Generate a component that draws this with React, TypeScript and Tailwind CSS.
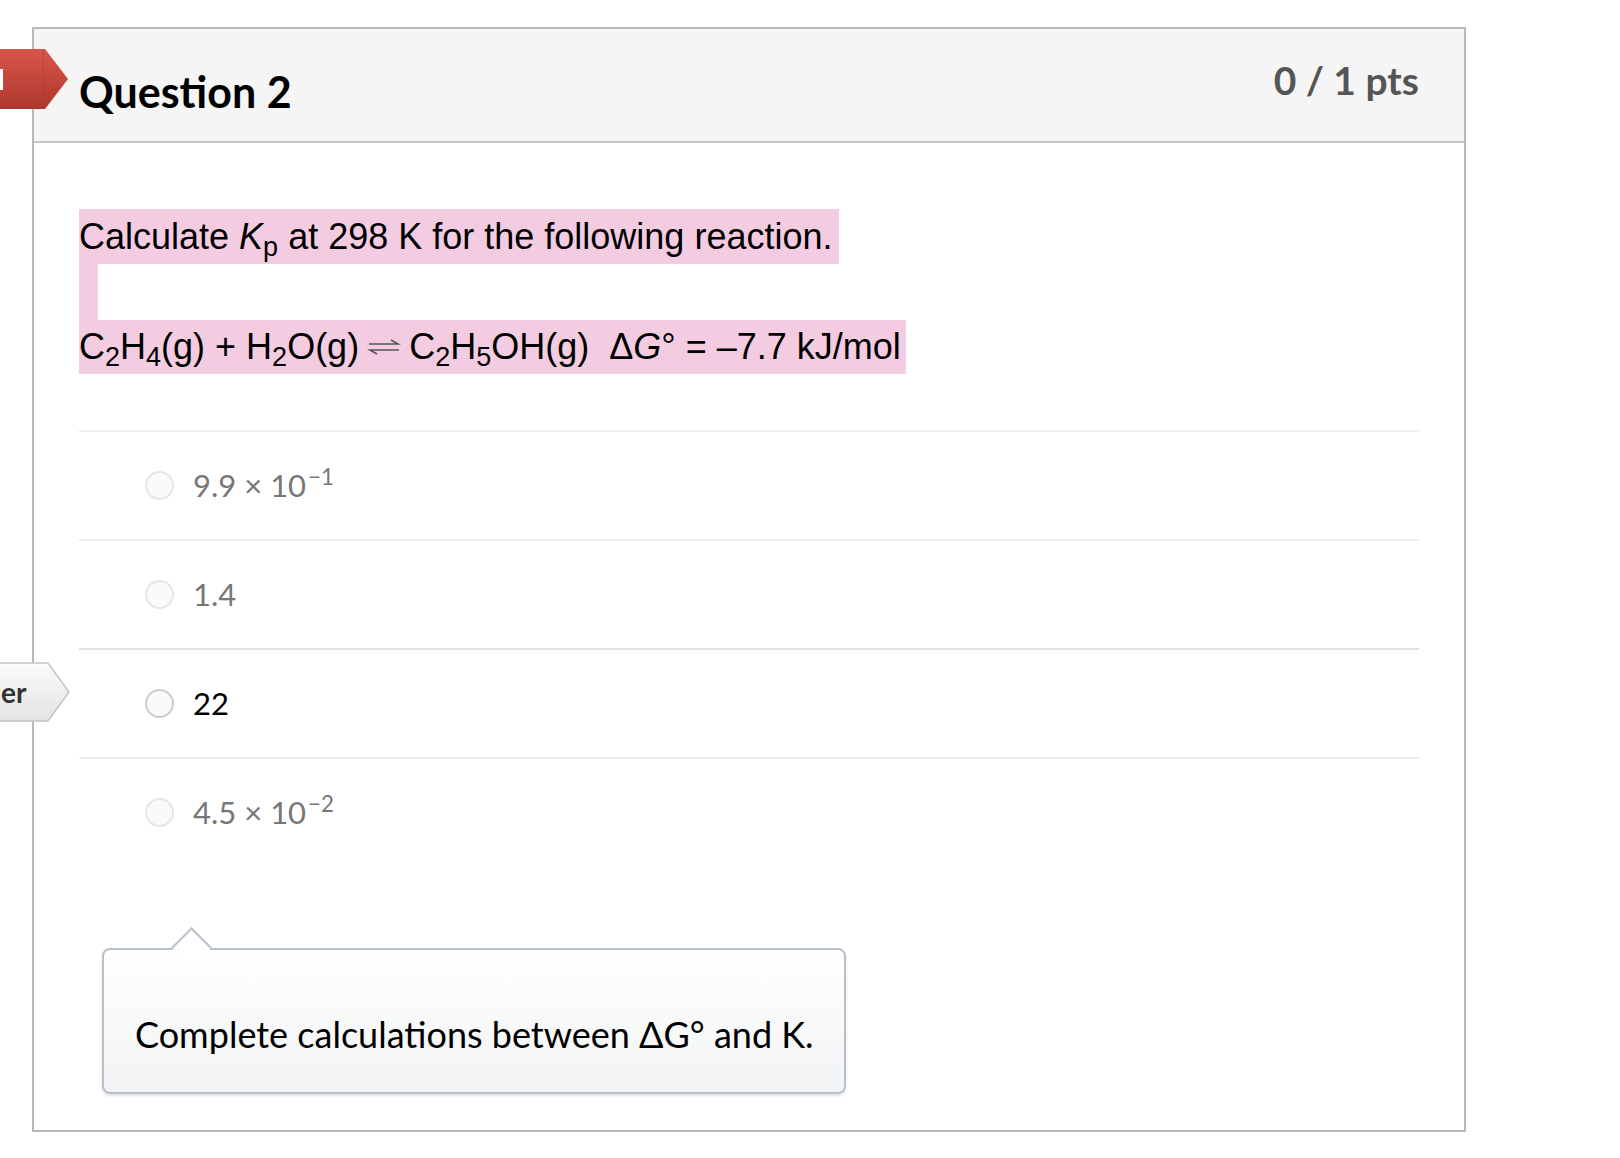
import React from 'react'

const pink = 'bg-[#f4cce1]'

function Header(){
  return (
    <div className="flex justify-between h-[114px] bg-[#f5f5f5] border-b-2 border-[#c6c6c6] pl-[45px] pr-[45px]">
      <h3 className="pt-[41px] text-[43px] leading-none font-bold text-black">Question 2</h3>
      <div className="pt-[32px] text-[39px] leading-none font-bold text-[#555]">0 / 1 pts</div>
    </div>
  )
}

function EqArrow(){
  return (
    <svg width="34" height="18" viewBox="0 0 34 18" className="inline-block align-middle mx-[8px] -mt-[4px]">
      <path d="M2 6 H31 L24 2" fill="none" stroke="#555" strokeWidth="1.6" />
      <path d="M32 12 H3 L10 16" fill="none" stroke="#555" strokeWidth="1.6" />
    </svg>
  )
}

function Prompt(){
  return (
    <div className="[font-family:'Liberation_Sans',Arial,sans-serif] text-[36px] text-black">
      <div className="flex">
        <div className={`${pink} h-[55px] leading-[55px] pr-[7px] whitespace-nowrap`}>
          Calculate <i>K</i><sub>p</sub> at 298 K for the following reaction.
        </div>
      </div>
      <div className={`${pink} w-[19px] h-[56px]`} />
      <div className="flex">
        <div className={`${pink} h-[54px] leading-[54px] pr-[5px] whitespace-nowrap`}>
          C<sub>2</sub>H<sub>4</sub>(g) + H<sub>2</sub>O(g)<EqArrow />C<sub>2</sub>H<sub>5</sub>OH(g)&nbsp; Δ<i>G</i>° = –7.7 kJ/mol
        </div>
      </div>
    </div>
  )
}

const answers: {text:React.ReactNode, picked?:boolean}[] = [
  {text:<>9.9 × 10<sup className="text-[0.72em] -top-[0.55em] ml-[2px]">−1</sup></>},
  {text:'1.4'},
  {text:'22', picked:true},
  {text:<>4.5 × 10<sup className="text-[0.72em] -top-[0.55em] ml-[2px]">−2</sup></>},
]

function Answers(){
  return (
    <div className="mt-[56px]">
      {answers.map((a,i)=>(
        <div key={i} className={`flex items-center h-[109px] border-t-2 ${a.picked?'border-[#e1e1e1]':'border-[#ededed]'}`}>
          <span className={`ml-[66px] w-[29px] h-[29px] rounded-full border-2 bg-[#fafafa] ${a.picked?'border-[#cdcdcd]':'border-[#e6e6e6]'}`} />
          <span className={`ml-[19px] text-[31px] leading-none ${a.picked?'text-black':'text-[#777]'}`}>{a.text}</span>
        </div>
      ))}
    </div>
  )
}

function Hint(){
  return (
    <div className="relative mt-[82px] ml-[23px] w-[744px] h-[146px] rounded-[8px] border-2 border-[#b8c1cb] bg-gradient-to-b from-white to-[#f2f3f4] shadow-[0_2px_3px_rgba(0,0,0,0.12)]">
      <span className="absolute left-[73px] -top-[17px] w-[29px] h-[29px] rotate-45 bg-white border-t-2 border-l-2 border-[#b8c1cb]" />
      <div className="pt-[66px] pl-[31px] text-[36px] leading-none text-black">
        Complete calculations between ΔG° and K.
      </div>
    </div>
  )
}

function RedTag(){
  return (
    <div className="absolute left-0 top-[49px] w-[68px] h-[60px]">
      <svg width="68" height="60" viewBox="0 0 68 60" className="block">
        <defs>
          <linearGradient id="rg" x1="0" y1="0" x2="0" y2="1">
            <stop offset="0" stopColor="#d9554a" />
            <stop offset="1" stopColor="#ad372d" />
          </linearGradient>
        </defs>
        <polygon points="0,0 45,0 68,30 45,60 0,60" fill="url(#rg)" />
        <line x1="43.5" y1="0" x2="43.5" y2="60" stroke="#a8352b" strokeOpacity="0.45" strokeWidth="1" />
      </svg>
      <span className="absolute left-0 top-[20px] w-[3px] h-[21px] bg-white" />
    </div>
  )
}

function CorrectTab(){
  return (
    <div className="absolute left-0 top-[662px] w-[70px] h-[60px]">
      <svg width="70" height="60" viewBox="0 0 70 60" className="block">
        <defs>
          <linearGradient id="gg" x1="0" y1="0" x2="0" y2="1">
            <stop offset="0" stopColor="#fbfbfb" />
            <stop offset="1" stopColor="#e3e3e3" />
          </linearGradient>
        </defs>
        <polygon points="-2,1 48,1 69,30 48,59 -2,59" fill="url(#gg)" stroke="#c3c3c3" strokeWidth="1.5" />
      </svg>
      <span className="absolute left-[1px] top-[16px] text-[28px] leading-none font-bold text-[#333]">er</span>
    </div>
  )
}

export default function App(){
  return (
    <div className="relative w-[1620px] min-h-[1158px] bg-white [font-family:Lato,sans-serif]">
      <div className="pl-[32px] pt-[27px]">
        <div className="w-[1434px] border-2 border-[#b9b9b9]">
          <Header />
          <div className="pl-[45px] pr-[45px] pt-[66px] pb-[36px]">
            <Prompt />
            <Answers />
            <Hint />
          </div>
        </div>
      </div>
      <RedTag />
      <CorrectTab />
    </div>
  )
}
